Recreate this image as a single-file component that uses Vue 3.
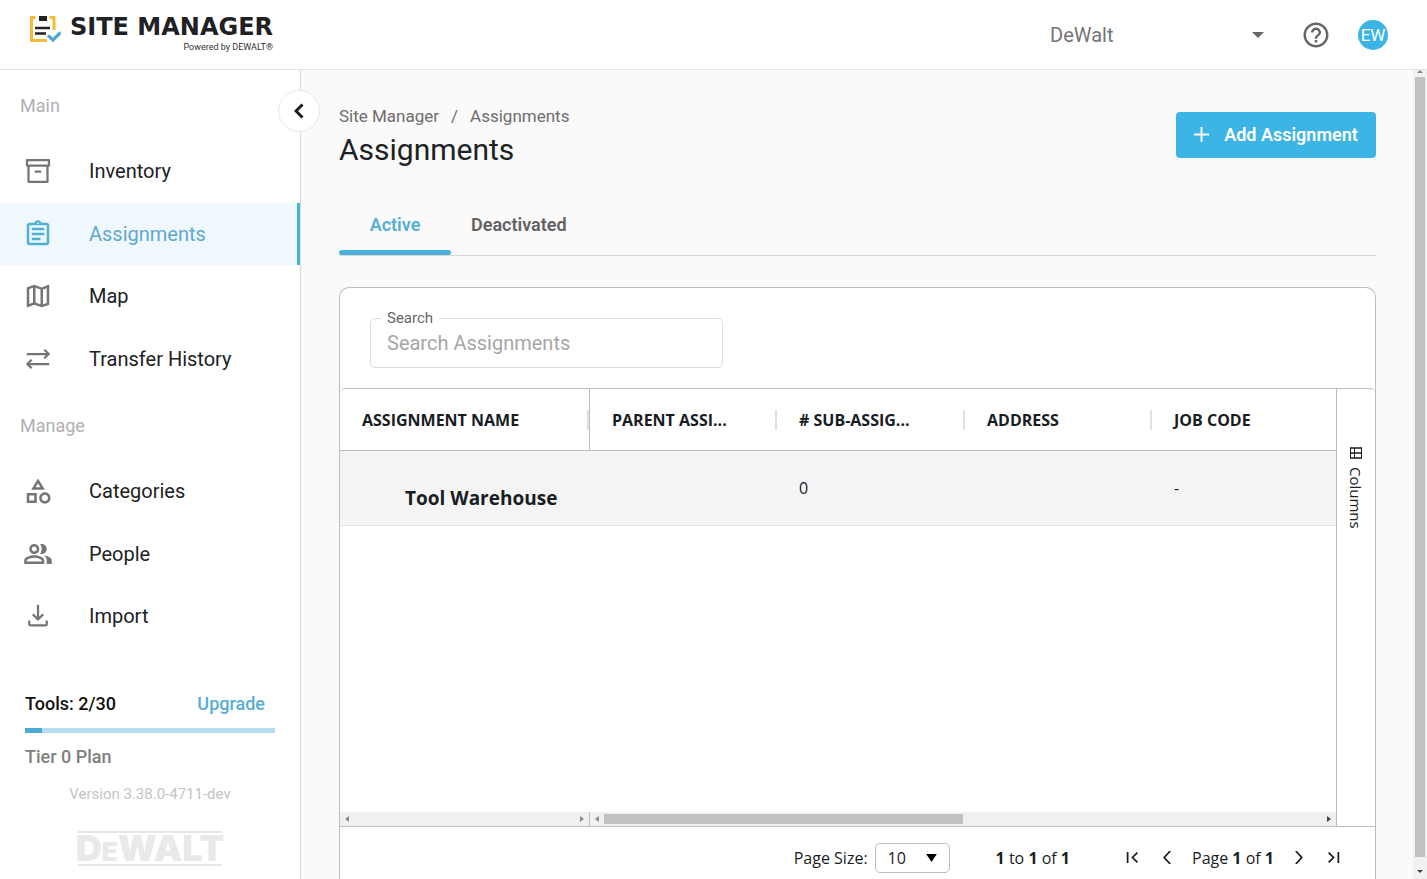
<script setup>
import { ref } from 'vue'

const mainNav = [
  { label: 'Inventory', icon: 'inventory' },
  { label: 'Assignments', icon: 'assignments', active: true },
  { label: 'Map', icon: 'map' },
  { label: 'Transfer History', icon: 'transfer' },
]
const manageNav = [
  { label: 'Categories', icon: 'categories' },
  { label: 'People', icon: 'people' },
  { label: 'Import', icon: 'import' },
]
const groups = [
  { title: 'Main', items: mainNav },
  { title: 'Manage', items: manageNav },
]

const icons = {
  inventory: { stroke: 'M3.2 3.2h17.6v4.4H3.2zM4.4 7.6h15.2v13H4.4zM9.4 12.4h5.2' },
  assignments: { fill: 'M7 15h7v2H7zm0-4h10v2H7zm0-4h10v2H7zm12-4h-4.18C14.4 1.84 13.3 1 12 1c-1.3 0-2.4.84-2.82 2H5c-1.1 0-2 .9-2 2v14c0 1.1.9 2 2 2h14c1.1 0 2-.9 2-2V5c0-1.1-.9-2-2-2zm-7-.25c.41 0 .75.34.75.75s-.34.75-.75.75-.75-.34-.75-.75.34-.75.75-.75zM19 19H5V5h14v14z' },
  map: { fill: 'M20.5 3l-.16.03L15 5.1 9 3 3.36 4.9c-.21.07-.36.25-.36.48V20.5c0 .28.22.5.5.5l.16-.03L9 18.9l6 2.1 5.64-1.9c.21-.07.36-.25.36-.48V3.5c0-.28-.22-.5-.5-.5zM10 5.47l4 1.4v11.66l-4-1.4V5.47zm-5 .99l3-1.01v11.7l-3 1.16V6.46zm14 11.08l-3 1.01V6.86l3-1.16v11.84z' },
  transfer: { stroke: 'M3 8h17.5M17 4.6L20.6 8 17 11.4M21 16H3.5M7 12.6L3.4 16 7 19.4' },
  categories: { fill: 'M12 2l-5.5 9h11L12 2zm0 3.84L13.93 9h-3.87L12 5.84zM17.5 13c-2.49 0-4.5 2.01-4.5 4.5s2.01 4.5 4.5 4.5 4.5-2.01 4.5-4.5-2.01-4.5-4.5-4.5zm0 7c-1.38 0-2.5-1.12-2.5-2.5s1.12-2.5 2.5-2.5 2.5 1.12 2.5 2.5-1.12 2.5-2.5 2.5zM3 21.5h8v-8H3v8zm2-6h4v4H5v-4z' },
  people: { fill: 'M16.67 13.13C18.04 14.06 19 15.32 19 17v3h4v-3c0-2.18-3.57-3.47-6.33-3.87zM15 12c2.21 0 4-1.79 4-4s-1.79-4-4-4c-.47 0-.91.1-1.33.24C14.5 5.27 15 6.58 15 8s-.5 2.73-1.33 3.76c.42.14.86.24 1.33.24zM9 12c2.21 0 4-1.79 4-4s-1.79-4-4-4-4 1.79-4 4 1.79 4 4 4zm0-6c1.1 0 2 .9 2 2s-.9 2-2 2-2-.9-2-2 .9-2 2-2zM9 13c-2.67 0-8 1.34-8 4v3h16v-3c0-2.66-5.33-4-8-4zm6 5H3v-.99C3.2 16.29 6.3 15 9 15s5.8 1.29 6 2v1z' },
  import: { stroke: 'M12 3v11.4M7.8 10.6l4.200 4.200 4.200-4.200M5 15.600V18.500q0 1 1 1h12q1 0 1-1v-2.900' },
}

const columns = ['ASSIGNMENT NAME', 'PARENT ASSI...', '# SUB-ASSIG...', 'ADDRESS', 'JOB CODE']
const rows = [{ name: 'Tool Warehouse', parent: '', sub: '0', address: '', job: '-' }]

const used = 2
const limit = 30
const search = ref('')
const company = ref('DeWalt')
const pageSize = ref('10')
</script>

<template>
  <div class="app">
    <header class="topbar">
      <a class="brand" href="#">
        <svg class="brand-mark" viewBox="0 0 32 28" aria-hidden="true">
          <path d="M6.500 2.500H2.500v23H18M20.500 2.500h4.500v12.500" fill="none" stroke="#f3bd3a" stroke-width="3" />
          <path d="M10 1h8v5h-8z" fill="#232323" />
          <path d="M6 13h15M6 18.500h11" fill="none" stroke="#232323" stroke-width="2.500" />
          <path d="M19 20.500l5 4.500 7.500-7.500" fill="none" stroke="#4fa9d3" stroke-width="3.200" />
        </svg>
        <span class="brand-text">
          <span class="brand-name">SITE MANAGER</span>
          <span class="brand-sub">Powered by DEWALT®</span>
        </span>
      </a>
      <div class="top-actions">
        <div class="company">
          <select v-model="company" aria-label="Company">
            <option>DeWalt</option>
          </select>
          <svg viewBox="0 0 12 6" aria-hidden="true"><path d="M0 0h12L6 6z" /></svg>
        </div>
        <button class="help" type="button" aria-label="Help">
          <svg viewBox="0 0 24 24"><path d="M11 18h2v-2h-2v2zm1-16C6.480 2 2 6.480 2 12s4.480 10 10 10 10-4.480 10-10S17.520 2 12 2zm0 18c-4.410 0-8-3.590-8-8s3.590-8 8-8 8 3.590 8 8-3.590 8-8 8zm0-14c-2.210 0-4 1.790-4 4h2c0-1.100.900-2 2-2s2 .900 2 2c0 2-3 1.750-3 5h2c0-2.250 3-2.500 3-5 0-2.210-1.790-4-4-4z" /></svg>
        </button>
        <button class="avatar" type="button">EW</button>
      </div>
    </header>

    <div class="body">
      <aside class="sidebar">
        <button class="collapse" type="button" aria-label="Collapse menu">
          <svg viewBox="0 0 10 16"><path d="M8.500 1.500L2 8l6.500 6.500" /></svg>
        </button>
        <nav v-for="group in groups" :key="group.title" class="group">
          <h2>{{ group.title }}</h2>
          <a v-for="item in group.items" :key="item.label" href="#" class="nav-item" :class="{ active: item.active }">
            <svg class="nav-icon" viewBox="0 0 24 24" aria-hidden="true">
              <path v-if="icons[item.icon].fill" class="solid" :d="icons[item.icon].fill" />
              <path v-else class="line" :d="icons[item.icon].stroke" />
            </svg>
            <span>{{ item.label }}</span>
          </a>
        </nav>
        <section class="plan">
          <div class="plan-row">
            <span>Tools: {{ used }}/{{ limit }}</span>
            <a href="#">Upgrade</a>
          </div>
          <div class="meter"><div class="meter-fill" :style="{ width: (used / limit) * 100 + '%' }"></div></div>
          <p class="tier">Tier 0 Plan</p>
          <p class="version">Version 3.38.0-4711-dev</p>
          <div class="maker">D<small>E</small>WALT</div>
        </section>
      </aside>

      <main class="page">
        <div class="page-head">
          <div>
            <div class="crumbs"><a href="#">Site Manager</a><span>/</span><a href="#">Assignments</a></div>
            <h1>Assignments</h1>
          </div>
          <button class="add" type="button">
            <svg viewBox="0 0 16 16" aria-hidden="true"><path d="M8 0v16M0 8h16" /></svg>
            Add Assignment
          </button>
        </div>

        <div class="tabs" role="tablist">
          <button class="tab selected" type="button" role="tab" aria-selected="true">Active</button>
          <button class="tab" type="button" role="tab" aria-selected="false">Deactivated</button>
        </div>

        <section class="card">
          <fieldset class="search">
            <legend><label for="search">Search</label></legend>
            <input id="search" v-model="search" type="text" placeholder="Search Assignments" />
          </fieldset>

          <div class="grid">
            <div class="grid-main">
              <table>
                <colgroup>
                  <col class="c-name" /><col class="c-a" /><col class="c-b" /><col class="c-a" /><col />
                </colgroup>
                <thead>
                  <tr>
                    <th v-for="c in columns" :key="c" scope="col"><div class="th">{{ c }}</div></th>
                  </tr>
                </thead>
                <tbody>
                  <tr v-for="r in rows" :key="r.name">
                    <td class="name">{{ r.name }}</td>
                    <td>{{ r.parent }}</td>
                    <td>{{ r.sub }}</td>
                    <td>{{ r.address }}</td>
                    <td>{{ r.job }}</td>
                  </tr>
                </tbody>
              </table>
              <div class="hscroll" aria-hidden="true">
                <div class="track pinned">
                  <svg viewBox="0 0 4 6"><path d="M4 0v6L0 3z" /></svg>
                  <svg viewBox="0 0 4 6"><path d="M0 0v6l4-3z" /></svg>
                </div>
                <div class="track">
                  <svg viewBox="0 0 4 6"><path d="M4 0v6L0 3z" /></svg>
                  <div class="rail"><div class="thumb"></div></div>
                  <svg class="dark" viewBox="0 0 4 6"><path d="M0 0v6l4-3z" /></svg>
                </div>
              </div>
            </div>
            <div class="side">
              <button type="button">
                <svg viewBox="0 0 14 12" aria-hidden="true"><path d="M1.500 .500v11M12.500 .500v11M5.500 1v10" /><path class="bar" d="M1 1h12M1 6h12M1 11h12" /></svg>
                Columns
              </button>
            </div>
          </div>

          <div class="pager">
            <div class="size">
              <label for="size">Page Size:</label>
              <div class="size-box">
                <select id="size" v-model="pageSize"><option>10</option></select>
                <svg viewBox="0 0 12 9" aria-hidden="true"><path d="M0 0h12L6 9z" /></svg>
              </div>
            </div>
            <div class="summary"><b>1</b> to <b>1</b> of <b>1</b></div>
            <div class="pages">
              <button class="first" type="button" aria-label="First page"><svg viewBox="0 0 12 12"><path d="M1.500 1v10M10.500 1.500L6 6l4.500 4.500" /></svg></button>
              <button type="button" aria-label="Previous page"><svg viewBox="0 0 12 12"><path d="M8.500 0L3 6l5.500 6" /></svg></button>
              <span>Page <b>1</b> of <b>1</b></span>
              <button type="button" aria-label="Next page"><svg viewBox="0 0 12 12"><path d="M3.500 0L9 6l-5.500 6" /></svg></button>
              <button class="last" type="button" aria-label="Last page"><svg viewBox="0 0 12 12"><path d="M10.500 1v10M1.500 1.500L6 6l-4.500 4.500" /></svg></button>
            </div>
          </div>
        </section>
      </main>

      <div class="vscroll" aria-hidden="true">
        <svg viewBox="0 0 6 3"><path d="M0 3h6L3 0z" /></svg>
        <div class="vthumb"></div>
        <svg class="down" viewBox="0 0 6 3"><path d="M0 0h6L3 3z" /></svg>
      </div>
    </div>
  </div>
</template>

<style>
body {
  margin: 0;
  overflow: hidden;
}
</style>

<style scoped>
* {
  box-sizing: border-box;
}
.app {
  height: 100vh;
  display: flex;
  flex-direction: column;
  font-family: Roboto, "Liberation Sans", sans-serif;
  color: #202124;
  background: #fff;
}
button {
  font: inherit;
  color: inherit;
  background: none;
  border: 0;
  padding: 0;
  cursor: pointer;
}
a {
  color: inherit;
  text-decoration: none;
}
select {
  appearance: none;
  border: 0;
  background: none;
  font: inherit;
  color: inherit;
  outline: none;
}
.topbar {
  flex: 0 0 70px;
  display: flex;
  align-items: center;
  justify-content: space-between;
  padding: 0 39px 0 29px;
  border-bottom: 1px solid #e4e4e4;
}
.brand {
  display: flex;
  align-items: flex-start;
  gap: 9px;
}
.brand-mark {
  width: 32px;
  height: 28px;
}
.brand-text {
  display: flex;
  flex-direction: column;
  align-items: flex-end;
}
.brand-name {
  font: 700 24px/24px "DejaVu Sans", sans-serif;
}
.brand-sub {
  font-size: 9px;
  line-height: 16px;
  color: #333;
}
.top-actions {
  display: flex;
  align-items: center;
}
.company {
  width: 214px;
  display: flex;
  align-items: center;
  color: #757575;
  font-size: 20px;
}
.company select {
  flex: 1;
  padding: 0;
}
.company svg {
  width: 12px;
  height: 6px;
  fill: #666;
}
.help {
  margin-left: 37px;
  height: 30px;
}
.help svg {
  width: 30px;
  height: 30px;
  fill: #666;
}
.avatar {
  margin-left: 27px;
  width: 30px;
  height: 30px;
  border-radius: 50%;
  background: #3cb4e5;
  color: #fff;
  font-size: 17px;
}
.body {
  flex: 1;
  min-height: 0;
  display: flex;
}
.sidebar {
  position: relative;
  flex: 0 0 301px;
  display: flex;
  flex-direction: column;
  border-right: 1px solid #dcdcdc;
}
.collapse {
  position: absolute;
  z-index: 1;
  top: 20px;
  right: -20px;
  width: 42px;
  height: 42px;
  border: 1px solid #e8e8e8;
  border-radius: 50%;
  background: #fff;
  display: grid;
  place-items: center;
}
.collapse svg {
  width: 10px;
  height: 16px;
  fill: none;
  stroke: #1c1c1c;
  stroke-width: 3;
}
.group h2 {
  margin: 0;
  padding: 0 20px;
  height: 70px;
  line-height: 72px;
  font-size: 18px;
  font-weight: 400;
  color: #b0b0b0;
}
.nav-item {
  display: flex;
  align-items: center;
  gap: 36px;
  height: 62px;
  padding-left: 23px;
  font-size: 20px;
  color: #202124;
}
.nav-item:nth-of-type(even) {
  margin-top: 1px;
}
.nav-item.active {
  background: #eff8fc;
  border-right: 3px solid #4fb0d6;
  color: #5fa9cf;
}
.nav-icon {
  width: 30px;
  height: 30px;
  color: #757575;
}
.active .nav-icon {
  color: #4fb0d6;
}
.solid {
  fill: currentColor;
}
.line {
  fill: none;
  stroke: currentColor;
  stroke-width: 1.8;
  stroke-linejoin: round;
}
.plan {
  margin-top: auto;
  padding: 0 25px 13px;
  font-weight: 500;
  font-size: 18px;
  color: #111;
}
.plan-row {
  display: flex;
  justify-content: space-between;
  padding-right: 10px;
  line-height: 24px;
}
.plan-row a {
  color: #56aed6;
}
.meter {
  height: 5px;
  margin-top: 12px;
  background: #b5dfef;
}
.meter-fill {
  height: 100%;
  background: #4aabd3;
}
.tier {
  margin: 12px 0 0;
  line-height: 24px;
  color: #808080;
}
.version {
  margin: 15px 0 0;
  line-height: 20px;
  text-align: center;
  font-size: 15px;
  font-weight: 400;
  color: #c4c4c4;
}
.maker {
  width: 144px;
  margin: 27px auto 0;
  border: solid #e6e6e6;
  border-width: 2px 0;
  height: 35px;
  display: flex;
  align-items: baseline;
  justify-content: center;
  font: 900 36px/31px Inter, sans-serif;
  color: #e9e9e9;
}
.maker small {
  font-size: 26px;
}
.page {
  flex: 1;
  min-width: 0;
  display: flex;
  flex-direction: column;
  padding: 34px 37px 0 38px;
  background: #fafafa;
}
.page-head {
  display: flex;
  justify-content: space-between;
  align-items: flex-start;
}
.crumbs {
  display: flex;
  gap: 12px;
  line-height: 24px;
  font-size: 17px;
  color: #6e6e6e;
}
h1 {
  margin: 4px 0 0;
  font-size: 30px;
  line-height: 36px;
  font-weight: 400;
}
.add {
  margin-top: 8px;
  width: 200px;
  height: 46px;
  padding-bottom: 1px;
  display: flex;
  align-items: center;
  justify-content: center;
  gap: 15px;
  border-radius: 4px;
  background: #3cb4e5;
  color: #fff;
  font-size: 18px;
  font-weight: 600;
}
.add svg {
  width: 15px;
  height: 15px;
  stroke: #fff;
  stroke-width: 2;
}
.tabs {
  display: flex;
  height: 62px;
  margin-top: 26px;
  border-bottom: 1px solid #d9d9d9;
}
.tab {
  display: flex;
  justify-content: center;
  min-width: 112px;
  padding: 19px 20px 0;
  font-size: 18px;
  line-height: 24px;
  font-weight: 600;
  color: #616161;
}
.tab.selected {
  position: relative;
  color: #56aed6;
}
.tab.selected::after {
  content: "";
  position: absolute;
  inset: auto 0 0;
  height: 5px;
  border-radius: 3px;
  background: #4ab0d9;
}
.card {
  flex: 1;
  min-height: 0;
  display: flex;
  flex-direction: column;
  margin-top: 31px;
  border: 1px solid #bdbdbd;
  border-bottom: 0;
  border-radius: 10px 10px 0 0;
  background: #fff;
  font-family: "Open Sans", "Noto Sans", sans-serif;
}
.search {
  flex: none;
  width: 353px;
  height: 59px;
  margin: 21px 0 20px 30px;
  padding: 0 16px;
  border: 1px solid #dcdcdc;
  border-radius: 5px;
  font-family: Roboto, sans-serif;
}
.search legend {
  margin-left: -6px;
  padding: 0 6px;
  font-size: 15px;
  line-height: 18px;
  color: #666;
}
.search input {
  width: 100%;
  height: 32px;
  border: 0;
  padding: 0;
  outline: none;
  background: none;
  font: 20px/32px Roboto, sans-serif;
}
.search input::placeholder {
  color: #a6a6a6;
}
.grid {
  flex: 1;
  min-height: 0;
  display: flex;
  border-top: 1px solid #bdbdbd;
  border-bottom: 1px solid #bdbdbd;
  border-radius: 5px 5px 0 0;
}
.grid-main {
  flex: 1;
  min-width: 0;
  display: flex;
  flex-direction: column;
  justify-content: space-between;
}
table {
  width: 100%;
  table-layout: fixed;
  border-collapse: separate;
  border-spacing: 0;
}
.c-name {
  width: 250px;
}
.c-a {
  width: 187px;
}
.c-b {
  width: 188px;
}
th {
  height: 62px;
  padding: 0 0 0 22px;
  border-bottom: 1px solid #bdbdbd;
  font-size: 16px;
  font-weight: 700;
  text-align: left;
  color: #181d1f;
}
th:first-child {
  border-right: 1px solid #bdbdbd;
}
.th {
  height: 20px;
  line-height: 20px;
  border-right: 2px solid #dde2e3;
}
th:last-child .th {
  border-right: 0;
}
td {
  height: 75px;
  padding: 0 0 0 22px;
  border-bottom: 1px solid #dde2e3;
  background: #f4f4f5;
  font-size: 16px;
  color: #181d1f;
}
td.name {
  padding: 20px 0 0 65px;
  font-size: 19px;
  font-weight: 700;
}
.hscroll {
  display: flex;
  height: 14px;
  background: #f0f0f0;
}
.track {
  flex: 1;
  display: flex;
  align-items: center;
  justify-content: space-between;
  padding: 0 5px;
}
.track.pinned {
  flex: 0 0 250px;
  border-right: 1px solid #bdbdbd;
}
.track svg {
  flex: none;
  width: 4px;
  height: 6px;
  fill: #8a8a8a;
}
.track svg.dark {
  fill: #444;
}
.rail {
  flex: 1;
  margin: 0 5px;
}
.thumb {
  width: 50%;
  height: 10px;
  background: #c1c1c1;
}
.side {
  flex: 0 0 39px;
  border-left: 1px solid #bdbdbd;
}
.side button {
  display: flex;
  align-items: center;
  gap: 8px;
  width: 38px;
  margin-top: 58px;
  writing-mode: vertical-rl;
  font-size: 15px;
}
.side svg {
  width: 14px;
  height: 12px;
  fill: none;
  stroke: #181d1f;
}
.side .bar {
  stroke-width: 1.5;
}
.pager {
  flex: none;
  display: flex;
  justify-content: flex-end;
  align-items: center;
  height: 52px;
  padding: 9px 35px 0 0;
  font-size: 16px;
  color: #181d1f;
}
.size {
  display: flex;
  align-items: center;
  gap: 7px;
}
.size-box {
  display: flex;
  align-items: center;
  width: 75px;
  height: 30px;
  padding: 0 12px;
  border: 1px solid #bdbdbd;
  border-radius: 5px;
}
.size-box select {
  flex: 1;
  min-width: 0;
  padding: 0;
}
.size-box svg {
  width: 11px;
  height: 8px;
}
.summary {
  margin-left: 46px;
}
.pages {
  display: flex;
  align-items: center;
  margin-left: 56px;
  gap: 18px;
}
.pages button {
  display: flex;
}
.pages .first {
  margin-right: 4px;
}
.pages .last {
  margin-left: 4px;
}
.pages svg {
  width: 13px;
  height: 13px;
  fill: none;
  stroke: #181d1f;
  stroke-width: 1.6;
}
.vscroll {
  flex: 0 0 14px;
  display: flex;
  flex-direction: column;
  align-items: center;
  background: #f1f1f1;
}
.vscroll svg {
  width: 6px;
  height: 3px;
  fill: #8a8a8a;
}
.vscroll svg.down {
  margin: 13px 0 6px;
  fill: #444;
}
.vthumb {
  flex: 1;
  width: 10px;
  margin-top: 4px;
  background: #c1c1c1;
}
</style>
